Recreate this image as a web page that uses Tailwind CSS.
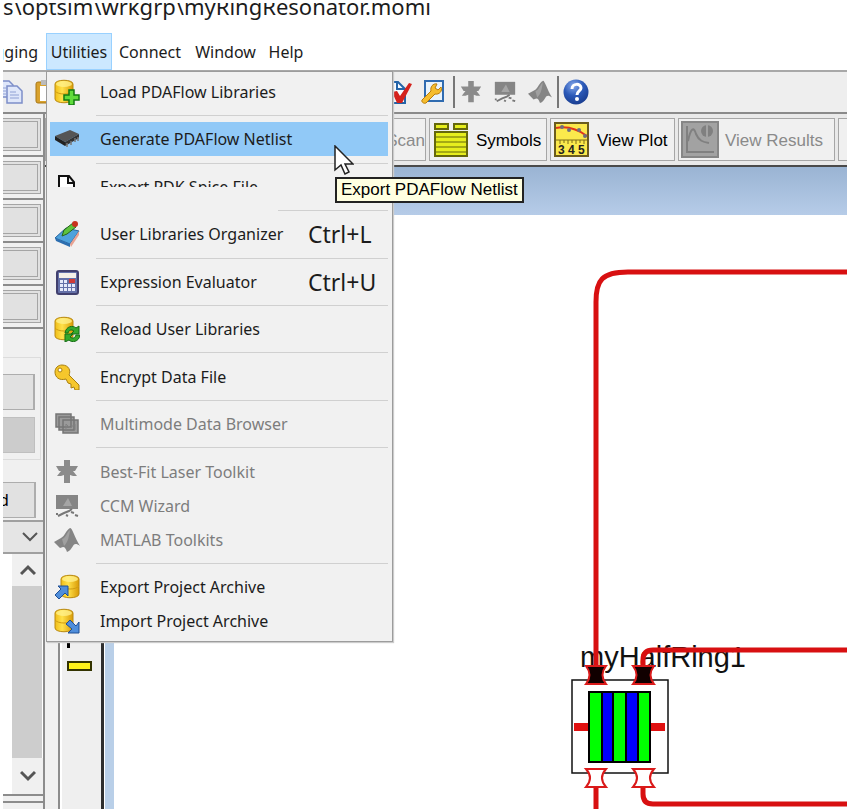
<!DOCTYPE html>
<html lang="en">
<head>
    <meta charset="UTF-8">
    <meta name="viewport" content="width=device-width, initial-scale=1.0">
    <title>myRingResonator.moml</title>
    <script src="https://cdn.jsdelivr.net/npm/@tailwindcss/browser@4"></script>
</head>
<body class="bg-white text-[#1c1c1c] font-['Noto_Sans',sans-serif]">

    <!-- shared icons -->
    <svg class="absolute h-0 w-0">
        <defs>
            <linearGradient id="gold" x1="0" x2="1"><stop offset="0" stop-color="#f0bd18"/><stop offset=".4" stop-color="#ffe14a"/><stop offset="1" stop-color="#d99a06"/></linearGradient>
            <radialGradient id="ball" cx=".4" cy=".25" r=".8"><stop offset="0" stop-color="#86a9ea"/><stop offset=".5" stop-color="#2b59b8"/><stop offset="1" stop-color="#173a8c"/></radialGradient>
        </defs>
        <symbol id="db" viewBox="0 0 26 26"><path d="M1 5c0-5 18-5 18 0v15c0 5-18 5-18 0z" fill="url(#gold)" stroke="#b98a12"/><ellipse cx="10" cy="5" rx="8" ry="3" fill="#fff08a" opacity=".8"/><path d="M1 12c3 4 15 4 18 0" fill="none" stroke="#cf9c12"/></symbol>
        <symbol id="star" viewBox="0 0 26 26"><path d="M10 1h6v6h8l-3 5h-2l4 5h-4l-3-1v8h-6v-8l-3 1H3l4-5H5L2 7h8z" fill="#8b8b8b"/></symbol>
        <symbol id="ccm" viewBox="0 0 26 26"><path d="M2 2h22v14H2z" fill="#858585"/><path d="M9 13l5-8 4 8z" fill="#a5a5a5"/><path d="M4 23l6-3 5-2 3-2M2 21h2M12 22l2 1M17 19l3 1M21 22l3 1" fill="none" stroke="#777" stroke-width="2"/></symbol>
        <symbol id="matlab" viewBox="0 0 26 26"><path d="M0 15l7-4c4-2 5-8 9-10 2-1 4 8 10 18-4-3-6-2-7 0-2 3-3 5-6 6-1-3-2-5-4-5l-3 1z" fill="#858585"/><path d="M8 12c4-1 5-7 8-9-1 7-2 12-6 16z" fill="#a0a0a0"/></symbol>
    </svg>

    <div class="relative mx-[3px] flex min-h-screen flex-col overflow-hidden">

        <header class="mt-[3px] flex h-[30px] items-end overflow-hidden">
            <h1 class="-mt-5 mb-3 whitespace-nowrap text-[22px] leading-[30px]">s\optsim\wrkgrp\myRingResonator.momi</h1>
        </header>

        <nav class="flex h-[37px] text-[16px]">
            <button class="flex w-[43px] items-center justify-end pr-2"><span>gging</span></button>
            <button class="w-[66px] border border-[#99d1ff] bg-[#cce8ff]">Utilities</button>
            <button class="w-[76px]">Connect</button>
            <button class="w-[75px]">Window</button>
            <button class="w-[46px]">Help</button>
        </nav>

        <!-- icon bar -->
        <div class="flex h-11 items-center border-y-2 border-t-[#a8a8a8] border-b-[#8a8a8a] bg-[#eeeeee]">
            <div class="flex w-[386px] items-center gap-3">
                <button aria-label="Copy"><svg class="h-6 w-5" viewBox="0 0 20 24"><g fill="#dfe7fa" stroke="#7d8fc9" stroke-width="1.5"><path d="M-4 1h10l4 4v12H-4z"/><path d="M4 6h10l5 5v12H4z"/></g><path d="M7 12h6M7 15h9M7 18h9M0 8h4M0 11h3M0 14h3" stroke="#8fa0d4"/></svg></button>
                <button aria-label="Paste"><svg class="h-6 w-5" viewBox="0 0 20 24"><rect x="1" y="2" width="18" height="21" rx="2" fill="#d9a22d" stroke="#a87716"/><path d="M6 0h8v5H6z" fill="#bbb"/><path d="M5 6h12v15H5z" fill="#fff"/></svg></button>
            </div>
            <button aria-label="Check"><svg class="h-6 w-6" viewBox="0 0 24 24"><path d="M1 2h8l7 7v14H1z" fill="#f7fbff" stroke="#2464a8" stroke-width="2"/><path d="M8 2v7h8" fill="none" stroke="#2464a8" stroke-width="2"/><path d="M3 12l5-1 3 5L20 3l3 1-10 19H8z" fill="#d4221c"/></svg></button>
            <button aria-label="Settings" class="ml-2"><svg class="h-6 w-6" viewBox="0 0 24 24"><path d="M4 1h18v20H4z" fill="#e9f3fb" stroke="#2f6bb0" stroke-width="2"/><path d="M1 20l9-9c-1-4 2-8 6-7l-2 4 3 2 3-3c2 4-2 8-6 7l-9 9c-2 1-5-1-4-3z" fill="#f5bd2e" stroke="#b87b0a"/></svg></button>
            <span class="ml-2 h-8 w-[2px] bg-[#777]"></span>
            <button disabled aria-label="Laser" class="ml-1"><svg class="h-6 w-6"><use href="#star"/></svg></button>
            <button disabled aria-label="CCM" class="ml-[10px]"><svg class="h-6 w-6"><use href="#ccm"/></svg></button>
            <button disabled aria-label="MATLAB" class="ml-[10px]"><svg class="h-6 w-[26px]"><use href="#matlab"/></svg></button>
            <span class="ml-1 h-8 w-[2px] bg-[#777]"></span>
            <button aria-label="Help" class="ml-1"><svg class="h-[26px] w-[26px]" viewBox="0 0 26 26"><circle cx="13" cy="13" r="12.500" fill="url(#ball)"/><path d="M9 10c0-6 9-6 9-1 0 3-4 3-4 7" fill="none" stroke="#fff" stroke-width="3"/><circle cx="14" cy="20" r="2" fill="#fff"/></svg></button>
        </div>

        <div class="flex flex-1">

            <!-- side panel -->
            <aside class="flex w-[42px] shrink-0 flex-col border-r-2 border-[#8c8c8c] bg-[#f0f0f0]">
                <button aria-label="Panel 1" class="h-[43px] border-b-2 border-[#8c8c8c] py-1 pr-[2px]"><span class="block h-full border-4 border-l-0 border-double border-[#a5a5a5] bg-[#e1e1e1]"></span></button>
                <button aria-label="Panel 2" class="h-[43px] border-b-2 border-[#8c8c8c] py-1 pr-[2px]"><span class="block h-full border-4 border-l-0 border-double border-[#a5a5a5] bg-[#e1e1e1]"></span></button>
                <button aria-label="Panel 3" class="h-[43px] border-b-2 border-[#8c8c8c] py-1 pr-[2px]"><span class="block h-full border-4 border-l-0 border-double border-[#a5a5a5] bg-[#e1e1e1]"></span></button>
                <button aria-label="Panel 4" class="h-[43px] border-b-2 border-[#8c8c8c] py-1 pr-[2px]"><span class="block h-full border-4 border-l-0 border-double border-[#a5a5a5] bg-[#e1e1e1]"></span></button>
                <button aria-label="Panel 5" class="h-[43px] border-b-2 border-[#8c8c8c] py-1 pr-[2px]"><span class="block h-full border-4 border-l-0 border-double border-[#a5a5a5] bg-[#e1e1e1]"></span></button>
                <div class="mt-7 mr-[2px] flex h-[103px] flex-col gap-[7px] border-y border-r border-[#dcdcdc] pt-4 pr-[5px]">
                    <button aria-label="Apply" class="h-9 border-y border-r-2 border-[#adadad] bg-[#e1e1e1]"></button>
                    <button disabled aria-label="Reset" class="h-9 border border-l-0 border-[#bfbfbf] bg-[#cccccc]"></button>
                </div>
                <button class="mt-[22px] mr-[7px] h-9 border-y border-r-2 border-[#adadad] bg-[#e1e1e1] text-left text-[16px] text-black"><span class="-ml-1">d</span></button>
                <button aria-label="Choose" class="mt-[2px] flex h-[34px] items-center justify-end border-y-2 border-[#a0a0a0] bg-[#e5e5e5] pr-[5px]"><svg class="h-4 w-4" viewBox="0 0 16 16"><path d="M1 4l7 7 7-7" fill="none" stroke="#555" stroke-width="2"/></svg></button>
                <div class="flex flex-1 flex-col bg-white pl-[9px]">
                    <button aria-label="Scroll up" class="flex h-8 items-center justify-center bg-[#f0f0f0]"><svg class="h-4 w-4" viewBox="0 0 16 16"><path d="M1 12l7-7 7 7" fill="none" stroke="#555" stroke-width="3"/></svg></button>
                    <div class="mr-px flex-1 bg-[#cdcdcd]"></div>
                    <button aria-label="Scroll down" class="flex h-9 items-center justify-center bg-[#f0f0f0]"><svg class="h-4 w-4" viewBox="0 0 16 16"><path d="M1 4l7 7 7-7" fill="none" stroke="#555" stroke-width="3"/></svg></button>
                </div>
                <div class="h-[9px] border-y-2 border-[#8c8c8c]"></div>
                <div class="h-[6px]"></div>
            </aside>

            <main class="flex min-w-0 flex-1 flex-col">
                <!-- text buttons -->
                <div class="flex h-[53px] gap-[3px] overflow-hidden border-b-2 border-[#4a4a4a] bg-[#e9e9e9] py-1 font-['Liberation_Sans',sans-serif] text-[17px] whitespace-nowrap">
                    <button disabled class="flex h-[43px] w-[381px] shrink-0 items-center justify-end border border-[#a6a6a6] bg-[#f0f0f0] pt-[2px] text-[#8a8a8a]">Scan</button>
                    <button class="flex h-[43px] w-[118px] shrink-0 items-center gap-2 border border-[#a6a6a6] bg-[#f0f0f0] pl-1 text-black">
                        <svg class="h-[34px] w-[34px] shrink-0" viewBox="0 0 34 34"><g fill="#e6ee1e" stroke="#65680c" stroke-width="2"><path d="M1 1h13v5H1zM20 1h13v5H20zM1 9h32v24H1z"/></g><path d="M2 14h30M2 19h30M2 24h30M2 29h30" stroke="#a4aa14" stroke-width="2"/></svg>
                        <span class="pt-[2px]">Symbols</span>
                    </button>
                    <button class="flex h-[43px] w-[125px] shrink-0 items-center gap-2 border border-[#a6a6a6] bg-[#f0f0f0] pl-[3px] text-black">
                        <svg class="h-[35px] w-[35px] shrink-0" viewBox="0 0 35 35"><path d="M1 1h33v33H1z" fill="#fbe94c" stroke="#6b5c1f" stroke-width="2"/><path d="M2 6c10-2 20 0 31 8" fill="none" stroke="#e0351c" stroke-width="2"/><g fill="#6e6e7e"><circle cx="8" cy="5" r="2"/><circle cx="15" cy="8" r="2"/><circle cx="25" cy="8" r="2"/><circle cx="31" cy="14" r="2"/></g><path d="M2 18h31M6 18v4M10 18v3M14 18v4M18 18v3M22 18v4M26 18v3M30 18v4" stroke="#7d6d18"/><text x="4" y="32" font-size="12" font-weight="bold" fill="#222">3</text><text x="14" y="32" font-size="12" font-weight="bold" fill="#222">4</text><text x="24" y="32" font-size="12" font-weight="bold" fill="#222">5</text></svg>
                        <span class="pt-[2px]">View Plot</span>
                    </button>
                    <button disabled class="flex h-[43px] w-[157px] shrink-0 items-center gap-[6px] border border-[#a6a6a6] bg-[#f0f0f0] pl-[2px] text-[#8a8a8a]">
                        <svg class="h-[37px] w-[38px] shrink-0" viewBox="0 0 38 37"><path d="M1 1h36v35H1z" fill="#a2a2a2" stroke="#868686" stroke-width="2"/><path d="M6 5v26h27M7 20c3-14 6-14 8-7 3 7 7 8 13 9" fill="none" stroke="#808080" stroke-width="2"/><circle cx="26" cy="10" r="6" fill="#808080"/><path d="M26 4v12" stroke="#a2a2a2" stroke-width="2"/></svg>
                        <span class="pt-[2px]">View Results</span>
                    </button>
                    <button aria-label="More" class="h-[43px] w-[40px] shrink-0 border border-[#a6a6a6] bg-[#f0f0f0]"></button>
                </div>

                <div class="flex flex-1">
                    <div class="w-[15px] shrink-0 border-r-2 border-[#8c8c8c] bg-[#f0f0f0]"></div>
                    <div class="ml-[2px] flex w-[42px] shrink-0 flex-col border-r-3 border-[#2e2e2e] bg-[#efefef]">
                        <div class="mt-[466px] ml-[5px] h-[15px] w-[3px] bg-black"></div>
                        <div class="mt-[13px] ml-[5px] h-[10px] w-[25px] border-2 border-[#333300] bg-[#fff21a]"></div>
                    </div>
                    <div class="ml-px flex flex-1 flex-col border-l-9 border-[#b9cfe8]">
                        <div class="h-12 bg-linear-to-b from-[#9ab4d3] to-[#b6cce8]"></div>
                        <!-- schematic -->
                        <div class="relative flex-1 overflow-hidden bg-white">
                            <svg class="absolute inset-0 h-full w-full" font-family="Liberation Sans, sans-serif">
                                <g transform="translate(-114 -215)">
                                    <rect x="572" y="680" width="96" height="93" fill="#fff" stroke="#111" stroke-width="1.500"/>
                                    <text x="580" y="667" font-size="29" fill="#111">myHalfRing1</text>
                                    <g fill="none" stroke="#d81011" stroke-width="5">
                                        <path d="M596 670V302C596 280 602 272 628 272H3000"/>
                                        <path d="M643 670V660Q643 650 653 650H3000"/>
                                        <path d="M596 786V3000"/>
                                        <path d="M643 786V794Q643 804 653 804H3000"/>
                                    </g>
                                    <path d="M574 727H589M650 727H665" stroke="#e01010" stroke-width="8"/>
                                    <path d="M589 692h61v70h-61z" fill="#0f0"/>
                                    <path d="M602 692h11v70h-11zM626 692h12v70h-12z" fill="#00f"/>
                                    <path d="M589 692h61v70h-61zM602 692v70M613 692v70M626 692v70M638 692v70" fill="none" stroke="#000" stroke-width="2"/>
                                    <g fill="#100" stroke="#da1a1a" stroke-width="2">
                                        <path d="M586 666h20q-7 9 0 18h-20q7-9 0-18z"/>
                                        <path d="M633 666h21q-7 9 0 18h-21q7-9 0-18z"/>
                                    </g>
                                    <g fill="#fff" stroke="#da1a1a" stroke-width="2">
                                        <path d="M586 769h20q-8 9 0 18h-20q8-9 0-18z"/>
                                        <path d="M633 769h21q-8 9 0 18h-21q8-9 0-18z"/>
                                    </g>
                                </g>
                            </svg>
                        </div>
                    </div>
                </div>
            </main>
        </div>

        <!-- Utilities menu -->
        <div class="absolute top-[71px] left-[43px] flex h-[571px] w-[347px] flex-col border border-[#9c9c9c] bg-[#f1f1f1] py-[3px] pr-1 pl-[3px] text-[16px] shadow-[1px_1px_1px_#ccc]">
            <button class="flex h-[34px] items-center gap-5 pl-1">
                <svg class="h-[26px] w-[26px]" viewBox="0 0 26 26"><use href="#db" width="26" height="26"/><path d="M15 11h5v5h5v5h-5v5h-5v-5h-5v-5h5z" fill="#5fdc3c" stroke="#137a12" stroke-width="1.500"/></svg>
                Load PDAFlow Libraries
            </button>
            <div class="ml-[46px] flex flex-1 items-center"><hr class="w-full border-[#d0d0d0]"></div>
            <button class="flex h-[34px] items-center gap-5 bg-[#91c9f7] pl-1">
                <svg class="h-[26px] w-[26px]" viewBox="0 0 26 26"><path d="M1 10L16 4l9 4-14 8z" fill="#555"/><path d="M1 10l10 6v4L1 14z" fill="#222"/><path d="M11 16l14-8v4l-14 8z" fill="#333"/><path d="M13 17v4M17 15v4M21 12v4M24 11v4" stroke="#777" stroke-width="1.500"/></svg>
                Generate PDAFlow Netlist
            </button>
            <div class="ml-[46px] flex flex-1 items-center"><hr class="w-full border-[#d0d0d0]"></div>
            <div class="h-[34px]">
                <button class="flex h-[17px] w-full items-start gap-5 overflow-hidden pl-1">
                    <svg class="mt-1 h-[26px] w-[26px] shrink-0" viewBox="0 0 26 26"><path d="M5 25V2h10l5 6v17zM14 2v7h6" fill="#fff" stroke="#111" stroke-width="2"/></svg>
                    <span class="leading-[34px]">Export PDK Spice File</span>
                </button>
            </div>
            <div class="ml-[228px] flex flex-1 items-center"><hr class="w-full border-[#d0d0d0]"></div>
            <button class="flex h-[34px] items-center gap-5 pl-1">
                <svg class="h-[26px] w-[26px]" viewBox="0 0 26 26"><path d="M1 17L12 7l13 3-9 13z" fill="#4ea2dc" stroke="#2563a0"/><path d="M1 17l15 6v3L2 20z" fill="#2c6eb0"/><path d="M16 23l9-13v4l-8 12z" fill="#e8a393"/><path d="M8 15l2-6 9-7 3 4-9 7z" fill="#5fc33c" stroke="#27651b"/><circle cx="21" cy="3" r="3" fill="#c8321e"/></svg>
                <span class="w-[188px] text-left whitespace-nowrap">User Libraries Organizer</span>
                <span class="text-[23px]">Ctrl+L</span>
            </button>
            <div class="ml-[46px] flex flex-1 items-center"><hr class="w-full border-[#d0d0d0]"></div>
            <button class="flex h-[34px] items-center gap-5 pl-1">
                <svg class="h-[26px] w-[26px]" viewBox="0 0 26 26"><rect x="3" y="2" width="21" height="23" rx="2" fill="#6470a8" stroke="#41406e" stroke-width="2"/><path d="M5 4h17v5H5z" fill="#f4f0e8"/><g fill="#e6e9fa"><path d="M6 11h3v3H6zM10 11h3v3h-3zM6 15h3v3H6zM10 15h3v3h-3zM14 15h3v3h-3zM18 15h3v3h-3zM6 19h3v3H6zM10 19h3v3h-3zM14 19h3v3h-3zM18 19h3v3h-3z"/></g><path d="M15 10h6v4h-6z" fill="#cf3b39"/></svg>
                <span class="w-[188px] text-left whitespace-nowrap">Expression Evaluator</span>
                <span class="text-[23px]">Ctrl+U</span>
            </button>
            <div class="ml-[46px] flex flex-1 items-center"><hr class="w-full border-[#d0d0d0]"></div>
            <button class="flex h-[34px] items-center gap-5 pl-1">
                <svg class="h-[26px] w-[26px]" viewBox="0 0 26 26"><use href="#db" width="26" height="26"/><path d="M11 17c1-7 8-8 11-5l3-2v8h-8l3-3c-3-2-5-1-6 2zM26 19c-1 7-8 8-11 5l-4 2v-8h8l-3 3c3 2 5 1 6-2z" fill="#35a82c" stroke="#166e16"/></svg>
                Reload User Libraries
            </button>
            <div class="ml-[46px] flex flex-1 items-center"><hr class="w-full border-[#d0d0d0]"></div>
            <button class="flex h-[34px] items-center gap-5 pl-1">
                <svg class="h-[26px] w-[26px]" viewBox="0 0 26 26"><path d="M8 1c7 0 9 6 7 10l10 10v5h-4l-1-3-3 1v-4l-3-1-2-4C5 17 1 13 1 8c0-4 3-7 7-7z" fill="#f6c72c" stroke="#a9800f"/><circle cx="6" cy="6" r="2" fill="#fff" stroke="#a9800f"/></svg>
                Encrypt Data File
            </button>
            <div class="ml-[46px] flex flex-1 items-center"><hr class="w-full border-[#d0d0d0]"></div>
            <button disabled class="flex h-[34px] items-center gap-5 pl-1 text-[#7d7d7d]">
                <svg class="h-[26px] w-[26px]" viewBox="0 0 26 26"><g fill="#9a9a9a" stroke="#757575" stroke-width="1.500"><path d="M2 3h15v13H2zM5 6h15v13H5zM9 9h15v13H9z"/></g><path d="M12 19v-6l4 4 5-4v6" fill="none" stroke="#818181"/></svg>
                Multimode Data Browser
            </button>
            <div class="ml-[46px] flex flex-1 items-center"><hr class="w-full border-[#d0d0d0]"></div>
            <button disabled class="flex h-[34px] items-center gap-5 pl-1 text-[#7d7d7d]">
                <svg class="h-[26px] w-[26px]"><use href="#star"/></svg>
                Best-Fit Laser Toolkit
            </button>
            <button disabled class="flex h-[34px] items-center gap-5 pl-1 text-[#7d7d7d]">
                <svg class="h-[26px] w-[26px]"><use href="#ccm"/></svg>
                CCM Wizard
            </button>
            <button disabled class="flex h-[34px] items-center gap-5 pl-1 text-[#7d7d7d]">
                <svg class="h-[26px] w-[26px]"><use href="#matlab"/></svg>
                MATLAB Toolkits
            </button>
            <div class="ml-[46px] flex flex-1 items-center"><hr class="w-full border-[#d0d0d0]"></div>
            <button class="flex h-[34px] items-center gap-5 pl-1">
                <svg class="h-[26px] w-[26px]" viewBox="0 0 26 26"><use href="#db" x="6" width="26" height="26"/><path d="M4 12h10v10l-3-3-6 6-4-4 6-6z" fill="#4f8edb" stroke="#1f4f94"/></svg>
                Export Project Archive
            </button>
            <button class="flex h-[34px] items-center gap-5 pl-1">
                <svg class="h-[26px] w-[26px]" viewBox="0 0 26 26"><use href="#db" width="26" height="26"/><path d="M25 25H14l4-4-6-5 4-4 6 6 3-4z" fill="#4f8edb" stroke="#1f4f94"/></svg>
                Import Project Archive
            </button>
        </div>

        <div role="tooltip" class="absolute top-[177px] left-[332px] border-2 border-[#222] bg-[#ffffe1] px-1 font-['Liberation_Sans',sans-serif] text-[17px] leading-[22px] whitespace-nowrap text-black">Export PDAFlow Netlist</div>
        <svg class="absolute top-[145px] left-[331px] h-[30px] w-[20px]" viewBox="0 0 20 30"><path d="M1 1v24l6-5 4 9 4-2-4-8h8z" fill="#fff" stroke="#222" stroke-width="1.500"/></svg>
    </div>

</body>
</html>
